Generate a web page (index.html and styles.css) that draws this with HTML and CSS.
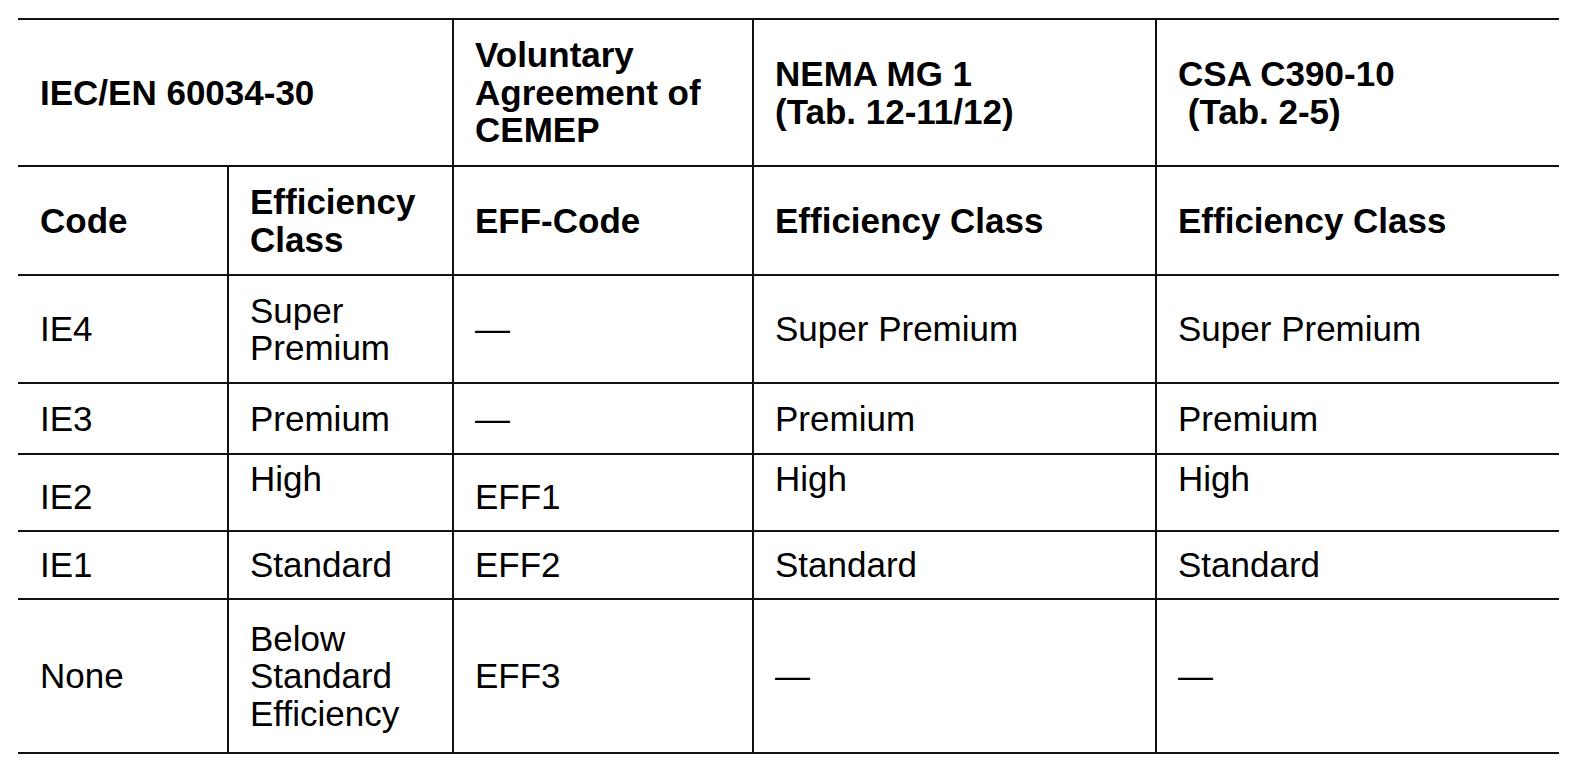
FILE: index.html
```html
<!DOCTYPE html>
<html lang="en">
<head>
<meta charset="utf-8">
<title>Efficiency classes</title>
<link rel="stylesheet" href="styles.css">
</head>
<body>
<table class="eff-table">
  <colgroup>
    <col class="c1"><col class="c2"><col class="c3"><col class="c4"><col class="c5">
  </colgroup>
  <thead>
    <tr class="r-h1">
      <th colspan="2">IEC/EN 60034-30</th>
      <th>Voluntary<br>Agreement of<br>CEMEP</th>
      <th>NEMA MG 1<br>(Tab. 12-11/12)</th>
      <th>CSA C390-10<br>&nbsp;(Tab. 2-5)</th>
    </tr>
    <tr class="r-h2">
      <th>Code</th>
      <th>Efficiency<br>Class</th>
      <th>EFF-Code</th>
      <th>Efficiency Class</th>
      <th>Efficiency Class</th>
    </tr>
  </thead>
  <tbody>
    <tr class="r-ie4">
      <td>IE4</td>
      <td>Super<br>Premium</td>
      <td>—</td>
      <td>Super Premium</td>
      <td>Super Premium</td>
    </tr>
    <tr class="r-ie3">
      <td>IE3</td>
      <td>Premium</td>
      <td>—</td>
      <td>Premium</td>
      <td>Premium</td>
    </tr>
    <tr class="r-ie2">
      <td>IE2</td>
      <td class="raised">High</td>
      <td>EFF1</td>
      <td class="raised">High</td>
      <td class="raised">High</td>
    </tr>
    <tr class="r-ie1">
      <td>IE1</td>
      <td>Standard</td>
      <td>EFF2</td>
      <td>Standard</td>
      <td>Standard</td>
    </tr>
    <tr class="r-none">
      <td>None</td>
      <td>Below<br>Standard<br>Efficiency</td>
      <td>EFF3</td>
      <td>—</td>
      <td>—</td>
    </tr>
  </tbody>
</table>
</body>
</html>
```

FILE: styles.css
```css
html, body {
  margin: 0;
  padding: 0;
  background: #ffffff;
}

body {
  font-family: "Liberation Sans", Arial, Helvetica, sans-serif;
  color: #000000;
}

.eff-table {
  margin: 18px 0 0 18px;
  width: 1541px;
  table-layout: fixed;
  border-collapse: collapse;
  font-size: 35px;
  line-height: 37.5px;
}

.c1 { width: 210px; }
.c2 { width: 225px; }
.c3 { width: 300px; }
.c4 { width: 403px; }
.c5 { width: 403px; }

.eff-table th,
.eff-table td {
  border-top: 2px solid #111111;
  border-bottom: 2px solid #111111;
  border-left: 2px solid #111111;
  padding: 0 8px 0 21px;
  text-align: left;
  vertical-align: middle;
}

.eff-table th {
  font-weight: bold;
}

.eff-table tr > :first-child {
  border-left: none;
  padding-left: 22px;
}

.r-h1 { height: 147px; }
.r-h2 { height: 109px; }
.r-ie4 { height: 108px; }
.r-ie3 { height: 71px; }
.r-ie2 { height: 77px; }
.r-ie1 { height: 68px; }
.r-none { height: 154px; }

.r-ie2 td {
  padding-top: 8px;
}

.r-ie2 td.raised {
  padding-top: 0;
  padding-bottom: 28px;
}
```
